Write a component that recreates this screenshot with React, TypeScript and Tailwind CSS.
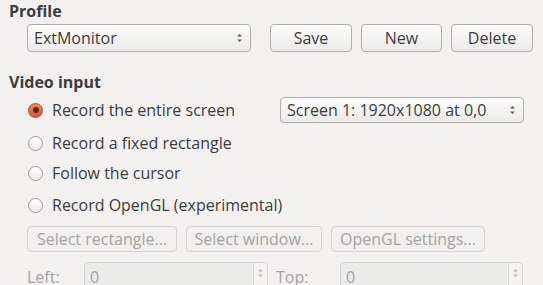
import React from "react";

const font = { fontFamily: '"Open Sans", "Noto Sans", sans-serif' };

function UpDown({ disabled = false }: { disabled?: boolean }) {
  const c = disabled ? "#b8b8b8" : "#5a5a5a";
  return (
    <svg width="7" height="12" viewBox="0 0 7 12">
      <path d="M3.5 2 L6 4.5 L1 4.5 Z" fill={c} />
      <path d="M3.5 10 L6 7.5 L1 7.5 Z" fill={c} />
    </svg>
  );
}

function Combo({ text, w }: { text: string; w: string }) {
  return (
    <div
      className={`${w} h-full flex items-center justify-between pl-[6px] pr-[7px] rounded-[4px] border border-[#b1aea8] bg-gradient-to-b from-[#fdfdfd] to-[#ebeae8] text-[#3c3c3c]`}
    >
      <span>{text}</span>
      <UpDown />
    </div>
  );
}

function Btn({ text, w, disabled = false }: { text: string; w: string; disabled?: boolean }) {
  return (
    <div
      className={
        disabled
          ? `${w} h-full flex items-center justify-center rounded-[4px] border border-[#d6d4d0] bg-[#f1f0ef] text-[#a3a3a3]`
          : `${w} h-full flex items-center justify-center rounded-[4px] border border-[#b1aea8] bg-gradient-to-b from-[#fdfdfd] to-[#ebeae8] text-[#3c3c3c]`
      }
    >
      {text}
    </div>
  );
}

function Radio({ checked = false }: { checked?: boolean }) {
  if (checked) {
    return (
      <div className="w-[15px] h-[15px] rounded-full bg-gradient-to-b from-[#f08a5d] to-[#d9512a] border border-[#b9481f] flex items-center justify-center">
        <div className="w-[6px] h-[6px] rounded-full bg-[#5a2a18]" />
      </div>
    );
  }
  return (
    <div className="w-[15px] h-[15px] rounded-full border border-[#9e9c98] bg-gradient-to-b from-[#ffffff] to-[#ecebe9]" />
  );
}

function RadioRow({ label, checked = false }: { label: string; checked?: boolean }) {
  return (
    <div className="flex items-center gap-[9px] pl-[28px]">
      <Radio checked={checked} />
      <span>{label}</span>
    </div>
  );
}

function Spin({ w }: { w: string }) {
  return (
    <div className={`${w} h-[30px] flex rounded-[4px] border border-[#d6d4d0] bg-[#ebebea] text-[#a3a3a3]`}>
      <div className="flex-1 pl-[5px] pt-[4px]">0</div>
      <div className="w-[14px] border-l border-[#dcdad6] bg-[#f4f3f2] rounded-r-[4px] flex flex-col items-center pt-[4px]">
        <UpDown disabled />
      </div>
    </div>
  );
}

export default function App() {
  return (
    <div
      className="w-[543px] h-[285px] overflow-hidden bg-[#f2f1f0] text-[#3c3c3c] text-[16px] leading-[20px]"
      style={font}
    >
      <div className="pl-[9px] pt-[1px] h-[24px] font-bold text-[#3c3c3c]">Profile</div>
      <div className="flex h-[28px] pl-[27px] gap-[9px]">
        <Combo text="ExtMonitor" w="w-[224px]" />
        <div className="w-[1px]" />
        <Btn text="Save" w="w-[82px]" />
        <Btn text="New" w="w-[81px]" />
        <Btn text="Delete" w="w-[82px]" />
      </div>
      <div className="pl-[9px] mt-[20px] h-[20px] font-bold">Video input</div>
      <div className="flex items-center h-[26px] mt-[5px]">
        <div className="w-[280px]">
          <RadioRow label="Record the entire screen" checked />
        </div>
        <div className="h-[26px]">
          <Combo text="Screen 1: 1920x1080 at 0,0" w="w-[244px]" />
        </div>
      </div>
      <div className="h-[30px] flex items-center mt-[5px]">
        <RadioRow label="Record a fixed rectangle" />
      </div>
      <div className="h-[30px] flex items-center">
        <RadioRow label="Follow the cursor" />
      </div>
      <div className="h-[30px] flex items-center mt-[2px]">
        <RadioRow label="Record OpenGL (experimental)" />
      </div>
      <div className="flex h-[26px] mt-[6px] pl-[27px] gap-[9px]">
        <Btn text="Select rectangle..." w="w-[150px]" disabled />
        <Btn text="Select window..." w="w-[136px]" disabled />
        <Btn text="OpenGL settings..." w="w-[154px]" disabled />
      </div>
      <div className="flex items-start mt-[10px] text-[#a3a3a3]">
        <div className="w-[84px] pl-[27px] pt-[5px]">Left:</div>
        <Spin w="w-[184px]" />
        <div className="w-[72px] pl-[8px] pt-[5px]">Top:</div>
        <Spin w="w-[183px]" />
      </div>
    </div>
  );
}
